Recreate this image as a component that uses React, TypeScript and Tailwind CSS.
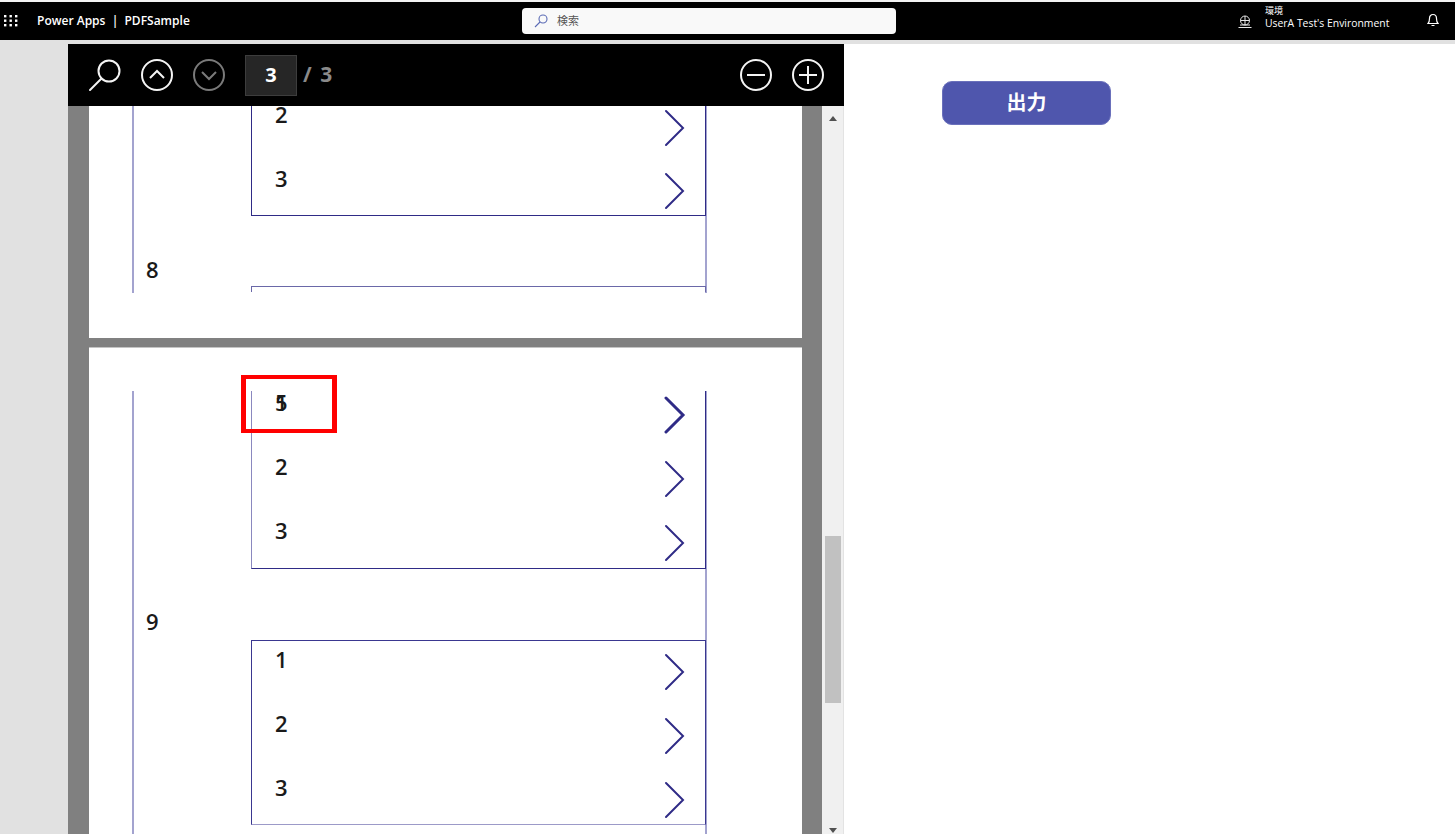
import React from 'react'

const ink = '#2f2b86'

function Chevron({ bold = false, className = 'mt-[5px]' }: { bold?: boolean; className?: string }) {
  return (
    <svg width="22" height="38" viewBox="0 0 22 38" className={`${className} shrink-0`}>
      <polyline points="2,2 19,19 2,36" fill="none" stroke={ink} strokeWidth={bold ? 3 : 2} strokeLinecap="round" strokeLinejoin="miter" />
    </svg>
  )
}

function Row({
  n,
  bold = false,
  rowClass = 'h-[64px]',
  textClass = 'mt-[2px] leading-[18px]',
  iconClass = 'mt-[5px]',
}: {
  n: string
  bold?: boolean
  rowClass?: string
  textClass?: string
  iconClass?: string
}) {
  return (
    <div className={`flex justify-between pl-[23px] pr-[19px] ${rowClass}`}>
      <span className={`text-[22px] font-semibold text-[#1a1a1a] ${textClass}`}>{n}</span>
      <Chevron bold={bold} className={iconClass} />
    </div>
  )
}

function RoundIcon({ children, dim = false }: { children: React.ReactNode; dim?: boolean }) {
  return (
    <svg width="32" height="32" viewBox="0 0 32 32" className="shrink-0">
      <g fill="none" stroke={dim ? '#7a7a7a' : '#f4f4f4'} strokeWidth="2">
        <circle cx="16" cy="16" r="15" />
        {children}
      </g>
    </svg>
  )
}

function Toolbar() {
  return (
    <div className="h-[62px] bg-black flex items-center pl-[20px] pr-[20px] shrink-0">
      <svg width="34" height="34" viewBox="0 0 34 34" className="shrink-0">
        <g fill="none" stroke="#f4f4f4" strokeWidth="2">
          <circle cx="21" cy="13" r="10.5" />
          <path d="M13.5 20.5 L2 32" strokeLinecap="round" />
        </g>
      </svg>
      <div className="ml-[19px]">
        <RoundIcon>
          <path d="M9 19 L16 12 L23 19" />
        </RoundIcon>
      </div>
      <div className="ml-[20px]">
        <RoundIcon dim>
          <path d="M9 13 L16 20 L23 13" />
        </RoundIcon>
      </div>
      <div className="ml-[20px] w-[52px] h-[41px] bg-[#262626] border border-[#3d3d3d] flex items-center justify-center text-white font-bold text-[20px]">
        3
      </div>
      <span className="ml-[6px] text-[#8a8a8a] font-bold text-[21px] tracking-[1.5px]">/ 3</span>
      <div className="ml-auto flex gap-[20px]">
        <RoundIcon>
          <path d="M7 16 H25" />
        </RoundIcon>
        <RoundIcon>
          <path d="M7 16 H25 M16 7 V25" />
        </RoundIcon>
      </div>
    </div>
  )
}

function Scrollbar() {
  return (
    <div className="w-[22px] bg-[#f0f0f0] border-r border-[#e3e3e3] flex flex-col items-center shrink-0">
      <svg width="8" height="5" viewBox="0 0 8 5" className="mt-[10px] shrink-0">
        <path d="M0 5 L4 0 L8 5 Z" fill="#505050" />
      </svg>
      <div className="mt-[415px] w-[16px] h-[167px] bg-[#c1c1c1] shrink-0" />
      <svg width="8" height="5" viewBox="0 0 8 5" className="mt-[125px] shrink-0">
        <path d="M0 0 L4 5 L8 0 Z" fill="#505050" />
      </svg>
    </div>
  )
}

export default function App() {
  return (
    <div className="relative h-[834px] w-[1455px] overflow-hidden bg-white font-['Open_Sans','Noto_Sans_CJK_JP',sans-serif]">
      <div className="h-[2px] bg-[#f3f3f3]" />
      <header className="h-[38px] bg-black flex items-center text-white">
        <svg width="14" height="14" viewBox="0 0 14 14" className="ml-[4px] shrink-0" fill="#fff">
          <rect x="0" y="1" width="2.4" height="2.4" />
          <rect x="5.5" y="1" width="2.4" height="2.4" />
          <rect x="11" y="1" width="2.4" height="2.4" />
          <rect x="0" y="5.5" width="2.4" height="2.4" />
          <rect x="5.5" y="5.5" width="2.4" height="2.4" />
          <rect x="11" y="5.5" width="2.4" height="2.4" />
          <rect x="0" y="10" width="2.4" height="2.4" />
          <rect x="5.5" y="10" width="2.4" height="2.4" />
          <rect x="11" y="10" width="2.4" height="2.4" />
        </svg>
        <span className="ml-[19px] w-[485px] text-[12px] font-semibold whitespace-pre">Power Apps  |  PDFSample</span>
        <div className="w-[374px] h-[26px] bg-[#f9f9f9] rounded-[4px] flex items-center pl-[12px] text-[#555]">
          <svg width="14" height="14" viewBox="0 0 14 14" className="shrink-0">
            <g fill="none" stroke="#5b6bb5" strokeWidth="1.1">
              <circle cx="9" cy="5" r="4" />
              <path d="M6 8 L1 13" />
            </g>
          </svg>
          <span className="ml-[9px] mt-[1px] text-[11px]">検索</span>
        </div>
        <svg width="14" height="14" viewBox="0 0 14 14" className="ml-[342px] mt-[2px] shrink-0">
          <g fill="none" stroke="#e8e8e8" strokeWidth="1">
            <circle cx="7" cy="5.5" r="4.5" />
            <path d="M2.5 5.5 H11.5 M7 1 V10 M0.5 12.5 H13.5 M2 10 H12" />
          </g>
        </svg>
        <div className="ml-[13px] flex flex-col w-[155px] -mt-[5px]">
          <span className="text-[9px] leading-[10px] -mt-[1px]">環境</span>
          <span className="text-[10.4px] leading-[15px]">UserA Test's Environment</span>
        </div>
        <svg width="12" height="14" viewBox="0 0 12 14" className="ml-[7px] shrink-0 -mt-[2px]">
          <path d="M1 10.5 C2.5 9 2.5 8 2.5 5.5 C2.5 3 4 1.5 6 1.5 C8 1.5 9.5 3 9.5 5.5 C9.5 8 9.5 9 11 10.5 Z M4.5 12.5 H7.5" fill="none" stroke="#fff" strokeWidth="1.2" />
        </svg>
      </header>
      <div className="h-[4px] bg-[#e1e1e1]" />

      <div className="flex h-[790px]">
        <div className="w-[68px] bg-[#e1e1e1] shrink-0" />
        <div className="w-[776px] flex flex-col shrink-0">
          <Toolbar />
          <div className="flex flex-1 min-h-0">
            <div className="w-[754px] bg-[#808080] pl-[21px] pr-[20px] overflow-hidden shrink-0">
              <div className="bg-white h-[232px] pl-[43px]">
                <div className="w-[575px] h-[187px] border-x-2 border-[#a3a3cf]">
                  <div className="ml-[117px] -mr-px h-[110px] border-l border-r border-b border-[#2f2b86]">
                    <Row n="2" rowClass="h-[61px]" textClass="leading-[16px]" iconClass="mt-[3px]" />
                    <Row n="3" />
                  </div>
                  <div className="mt-[41px] pl-[12px] text-[22px] font-semibold leading-[24px] text-[#1a1a1a]">8</div>
                  <div className="ml-[117px] -mr-px mt-[5px] h-[6px] border-l border-t border-r border-[#6a68a8]" />
                </div>
              </div>
              <div className="mt-[9px] bg-white h-[487px] border-t border-[#c4c4c4] pt-[43px] pl-[43px]">
                <div className="w-[575px] h-[460px] border-x-2 border-[#a3a3cf]">
                  <div className="relative ml-[117px] -mr-px h-[178px] border-l border-r border-b border-l-[#8a88bf] border-r-[#2f2b86] border-b-[#2f2b86]">
                    <span className="absolute left-[23px] top-[2px] text-[22px] font-semibold leading-[18px] text-[#1a1a1a]">1</span>
                    <Row n="5" bold />
                    <Row n="2" />
                    <Row n="3" />
                  </div>
                  <div className="mt-[40px] pl-[12px] text-[22px] font-semibold leading-[24px] text-[#1a1a1a]">9</div>
                  <div className="ml-[117px] -mr-px mt-[7px] h-[185px] pt-[7px] border border-[#3a3790] border-b-[#9c9ac8]">
                    <Row n="1" />
                    <Row n="2" />
                    <Row n="3" />
                  </div>
                </div>
              </div>
            </div>
            <Scrollbar />
          </div>
        </div>
        <div className="flex-1 bg-white pl-[98px] pt-[37px]">
          <button className="w-[169px] h-[44px] bg-[#4f56ad] border border-[#6a70bb] rounded-[10px] text-white font-bold text-[20px] leading-[38px]">
            出力
          </button>
        </div>
      </div>

      <div className="absolute left-[241px] top-[375px] w-[96px] h-[58px] border-x-[5px] border-y-[4px] border-[#ff0000]" />
    </div>
  )
}
